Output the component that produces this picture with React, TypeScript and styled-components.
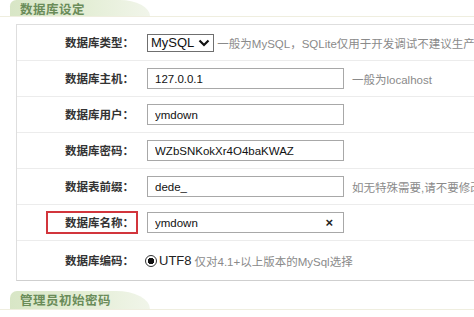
import * as React from 'react';
import styled, { createGlobalStyle } from 'styled-components';

const GlobalStyle = createGlobalStyle`
html, body {
margin: 0;
padding: 0;
background: #fff;
}
body {
font-family: "Liberation Sans", "Noto Sans CJK SC", sans-serif;
}
`

interface Row {
    label: string;
    kind: 'select' | 'text' | 'radio';
    value: string;
    hint?: string;
    clearable?: boolean;
    highlight?: boolean;
}

const rows: Row[] = [
    { label: '数据库类型：', kind: 'select', value: 'MySQL', hint: '一般为MySQL，SQLite仅用于开发调试不建议生产中使用' },
    { label: '数据库主机：', kind: 'text', value: '127.0.0.1', hint: '一般为localhost' },
    { label: '数据库用户：', kind: 'text', value: 'ymdown' },
    { label: '数据库密码：', kind: 'text', value: 'WZbSNKokXr4O4baKWAZ' },
    { label: '数据表前缀：', kind: 'text', value: 'dede_', hint: '如无特殊需要,请不要修改' },
    { label: '数据库名称：', kind: 'text', value: 'ymdown', clearable: true, highlight: true },
    { label: '数据库编码：', kind: 'radio', value: 'UTF8', hint: '仅对4.1+以上版本的MySql选择' },
];

export default function App() {
    return <Page>
        <GlobalStyle />
        <SectionHead $top>
            <Tab>数据库设定</Tab>
        </SectionHead>
        <Panel>
            {rows.map(row => (
                <FormRow key={row.label}>
                    <LabelCell>
                        <Label $highlight={row.highlight}>{row.label}</Label>
                    </LabelCell>
                    <Control>
                        {row.kind === 'select' && (
                            <SelectBox>
                                <span>{row.value}</span>
                                <svg width="12" height="8" viewBox="0 0 12 8">
                                    <path d="M1.5 1.5 L6 6 L10.5 1.5" fill="none" stroke="#111" strokeWidth="2.2" />
                                </svg>
                            </SelectBox>
                        )}
                        {row.kind === 'text' && (
                            <Field>
                                <FieldInput defaultValue={row.value} readOnly />
                                {row.clearable && <ClearMark>×</ClearMark>}
                            </Field>
                        )}
                        {row.kind === 'radio' && (
                            <RadioLabel>
                                <RadioDot />
                                {row.value}
                            </RadioLabel>
                        )}
                        {row.hint && <Hint $tight={row.kind !== 'text'}>{row.hint}</Hint>}
                    </Control>
                </FormRow>
            ))}
        </Panel>
        <SectionHead>
            <Tab>管理员初始密码</Tab>
        </SectionHead>
    </Page>
}

const Page = styled.div`
width: 474px;
height: 317px;
overflow: hidden;
`

const SectionHead = styled.div<{ $top?: boolean }>`
display: flex;
height: ${p => p.$top ? '16px' : '18px'};
margin-top: ${p => p.$top ? '0' : '10px'};
padding-left: 10px;
border-bottom: 1px solid #efeedf;
`

const Tab = styled.div`
width: 140px;
padding-left: 10px;
box-sizing: border-box;
background: linear-gradient(to right, #d8e6c6 0%, #e4eed6 55%, #f1f5ea 100%);
border-top-left-radius: 7px;
border-top-right-radius: 34px 18px;
font-family: "Noto Sans CJK SC", sans-serif;
font-size: 12.5px;
font-weight: bold;
line-height: 17px;
letter-spacing: 0.5px;
color: #6a8c59;
white-space: nowrap;
`

const Panel = styled.div`
width: 620px;
margin: 7px 0 0 16px;
border: 1px solid #dedede;
border-bottom-color: #cfcfcf;
border-right: none;
`

const FormRow = styled.div`
display: grid;
grid-template-columns: 121px 1fr;
column-gap: 9px;
align-items: center;
height: 35px;
border-bottom: 1px solid #ececec;
&:last-child {
height: 39px;
border-bottom: none;
}
`

const LabelCell = styled.div`
display: flex;
justify-content: flex-end;
`

const Label = styled.span<{ $highlight?: boolean }>`
padding: 2px 2px 2px 17px;
border: 2px solid ${p => p.$highlight ? '#d2353c' : 'transparent'};
font-family: "Noto Sans CJK SC", sans-serif;
font-size: 11.5px;
font-weight: bold;
line-height: 15px;
color: #333;
white-space: nowrap;
`

const Control = styled.div`
display: flex;
align-items: center;
white-space: nowrap;
`

const SelectBox = styled.div`
display: flex;
align-items: center;
gap: 4px;
height: 16px;
padding: 0 3px 0 3px;
border: 1px solid #6f6f6f;
font-size: 13px;
color: #111;
`

const Field = styled.div`
display: flex;
align-items: center;
width: 197px;
height: 21px;
box-sizing: border-box;
border: 1px solid #a8a8a8;
background: #fff;
`

const FieldInput = styled.input`
flex: 1;
min-width: 0;
border: none;
outline: none;
padding: 0 0 0 7px;
background: transparent;
font-family: "Liberation Sans", sans-serif;
font-size: 11.5px;
color: #111;
`

const ClearMark = styled.span`
margin-right: 10px;
font-size: 13px;
font-weight: bold;
line-height: 1;
color: #222;
`

const Hint = styled.span<{ $tight?: boolean }>`
margin-left: ${p => p.$tight ? '3px' : '8px'};
font-family: "Liberation Sans", "Noto Sans CJK SC", sans-serif;
font-size: 11.5px;
color: #8a8a8a;
`

const RadioLabel = styled.label`
display: flex;
align-items: center;
gap: 2px;
margin-left: -2px;
font-size: 13px;
color: #222;
`

const RadioDot = styled.span`
width: 10px;
height: 10px;
border: 1px solid #333;
border-radius: 50%;
background: radial-gradient(circle, #111 0 3px, #fff 3.5px);
`
